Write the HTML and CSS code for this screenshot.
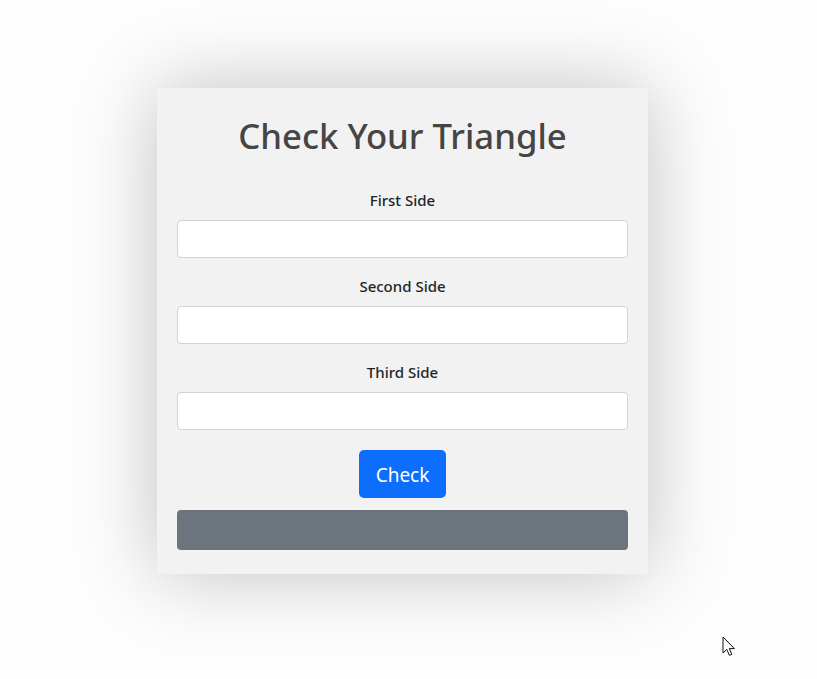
FILE: index.html
```html
<!DOCTYPE html>
<html lang="en">
<head>
<meta charset="utf-8">
<title>Check Your Triangle</title>
<link rel="stylesheet" href="styles.css">
</head>
<body>
<main class="page">
  <section class="card">
    <h1 class="title">Check Your Triangle</h1>
    <div class="group">
      <label class="label" for="a">First Side</label>
      <input class="input" id="a" type="text">
    </div>
    <div class="group">
      <label class="label" for="b">Second Side</label>
      <input class="input" id="b" type="text">
    </div>
    <div class="group">
      <label class="label" for="c">Third Side</label>
      <input class="input" id="c" type="text">
    </div>
    <div class="actions">
      <button class="btn" type="button">Check</button>
    </div>
    <div class="result"></div>
  </section>
</main>
<svg class="cursor" width="14" height="22" viewBox="0 0 14 22" aria-hidden="true">
  <path d="M1 1 L1 17 L4.8 13.4 L7.4 19.4 L9.8 18.4 L7.3 12.6 L12.4 12.6 Z" fill="#fff" stroke="#111" stroke-width="1" stroke-linejoin="round"/>
</svg>
</body>
</html>
```
FILE: styles.css
```css
* { box-sizing: border-box; }
html, body { margin: 0; padding: 0; }
body {
  background: #fdfdfd;
  font-family: "Noto Sans", "Open Sans", sans-serif;
  color: #212529;
  width: 817px;
  height: 679px;
  overflow: hidden;
}
.page {
  display: flex;
  justify-content: center;
  padding-top: 88px;
  padding-right: 12px;
}
.card {
  width: 491px;
  background: #f2f2f2;
  box-shadow: 0 0 75px rgba(0, 0, 0, 0.24);
  padding: 20px 20px 24px;
  display: flex;
  flex-direction: column;
}
.title {
  margin: 0 0 28px;
  text-align: center;
  font-size: 34.7px;
  font-weight: 500;
  line-height: 48px;
  color: #454545;
  padding-top: 4px;
}
.group {
  display: flex;
  flex-direction: column;
  margin-bottom: 16px;
}
.label {
  text-align: center;
  font-size: 15px;
  font-weight: 500;
  line-height: 24px;
  margin-bottom: 8px;
  color: #212529;
}
.input {
  height: 38px;
  border: 1px solid #ced4da;
  border-radius: 4px;
  background: #fff;
  font: inherit;
}
.actions {
  display: flex;
  justify-content: center;
  margin-top: 4px;
  margin-bottom: 12px;
}
.btn {
  height: 48px;
  width: 87px;
  background: #0d6efd;
  color: #fff;
  border: 0;
  border-radius: 5px;
  font-family: inherit;
  font-size: 19px;
  line-height: 1;
  padding: 3px 0 0;
}
.result {
  height: 40px;
  background: #6c757d;
  border-radius: 4px;
}
.cursor {
  position: absolute;
  left: 722px;
  top: 636px;
}
```
